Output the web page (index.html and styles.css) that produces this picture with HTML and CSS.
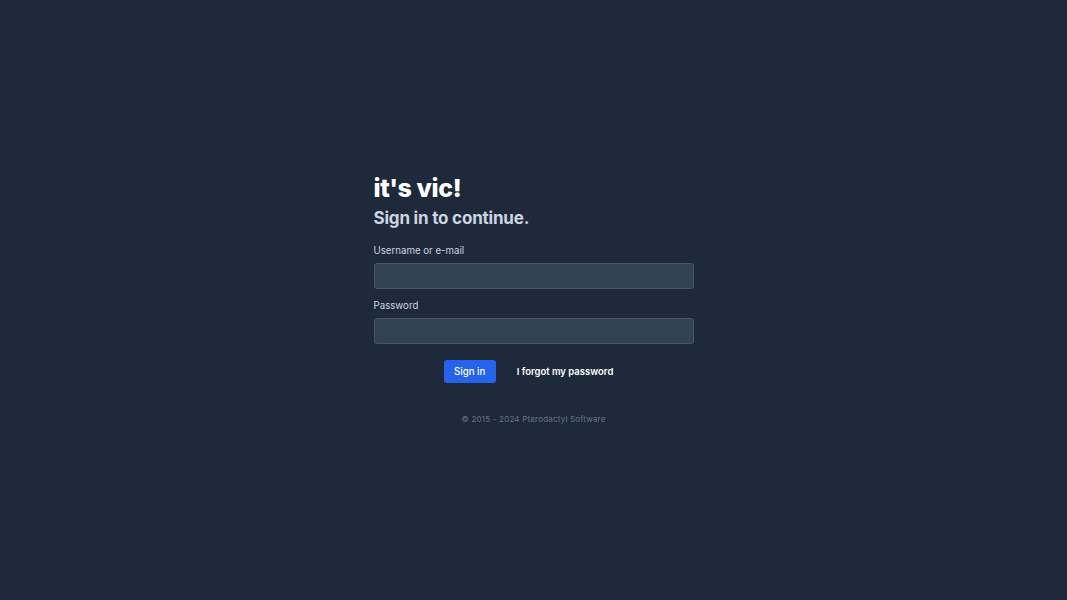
FILE: index.html
```html
<!DOCTYPE html>
<html lang="en">
<head>
  <meta charset="UTF-8">
  <meta name="viewport" content="width=device-width, initial-scale=1">
  <title>Sign in</title>
  <link rel="stylesheet" href="styles.css">
</head>
<body>
  <div class="container">
    <h1>it's vic!</h1>
    <h2>Sign in to continue.</h2>
    <form class="login-form">
      <label for="username">Username or e-mail</label>
      <input type="text" id="username" name="username">

      <label for="password">Password</label>
      <input type="password" id="password" name="password">

      <div class="actions">
        <button type="submit">Sign in</button>
        <a href="#" class="forgot">I forgot my password</a>
      </div>
    </form>
    <p class="footer">&copy; 2015 - 2024 Pterodactyl Software</p>
  </div>
</body>
</html>
```
FILE: styles.css
```css
body {
  background: #1e293b;
  color: #fff;
  font-family: Inter, 'Noto Sans', sans-serif;
  margin: 0;
  padding: 0;
  display: flex;
  align-items: center;
  justify-content: center;
  min-height: 100vh;
}
.container {
  width: 320px;
  margin-top: -2px;
}
h1 {
  font-size: 25px;
  font-weight: 800;
  line-height: 30px;
  margin: 0;
  letter-spacing: -0.4px;
}
h2 {
  font-size: 17px;
  font-weight: 700;
  line-height: 22px;
  margin: 4px 0 0;
  color: #cbd5e1;
  letter-spacing: -0.2px;
}
.login-form {
  margin-top: 15px;
}
label {
  display: block;
  font-size: 9.7px;
  line-height: 14px;
  color: #cbd5e1;
  margin-bottom: 5px;
}
input {
  display: block;
  box-sizing: border-box;
  width: 100%;
  height: 26px;
  background: #334155;
  border: 1px solid #475569;
  border-radius: 3px;
  color: #fff;
  margin-bottom: 10px;
}
.actions {
  display: flex;
  justify-content: center;
  align-items: center;
  gap: 21px;
  margin-top: 16px;
  padding-right: 10px;
}
button {
  background: #2563eb;
  color: #fff;
  border: none;
  border-radius: 3px;
  font-family: inherit;
  font-size: 9.7px;
  font-weight: 500;
  width: 52px;
  height: 23px;
  padding: 0;
  cursor: pointer;
}
.forgot {
  color: #fff;
  text-decoration: none;
  font-size: 9.5px;
  font-weight: 600;
}
.footer {
  text-align: center;
  font-size: 8px;
  line-height: 11px;
  color: #64748b;
  letter-spacing: 0.2px;
  margin: 31px 0 0;
}
```
